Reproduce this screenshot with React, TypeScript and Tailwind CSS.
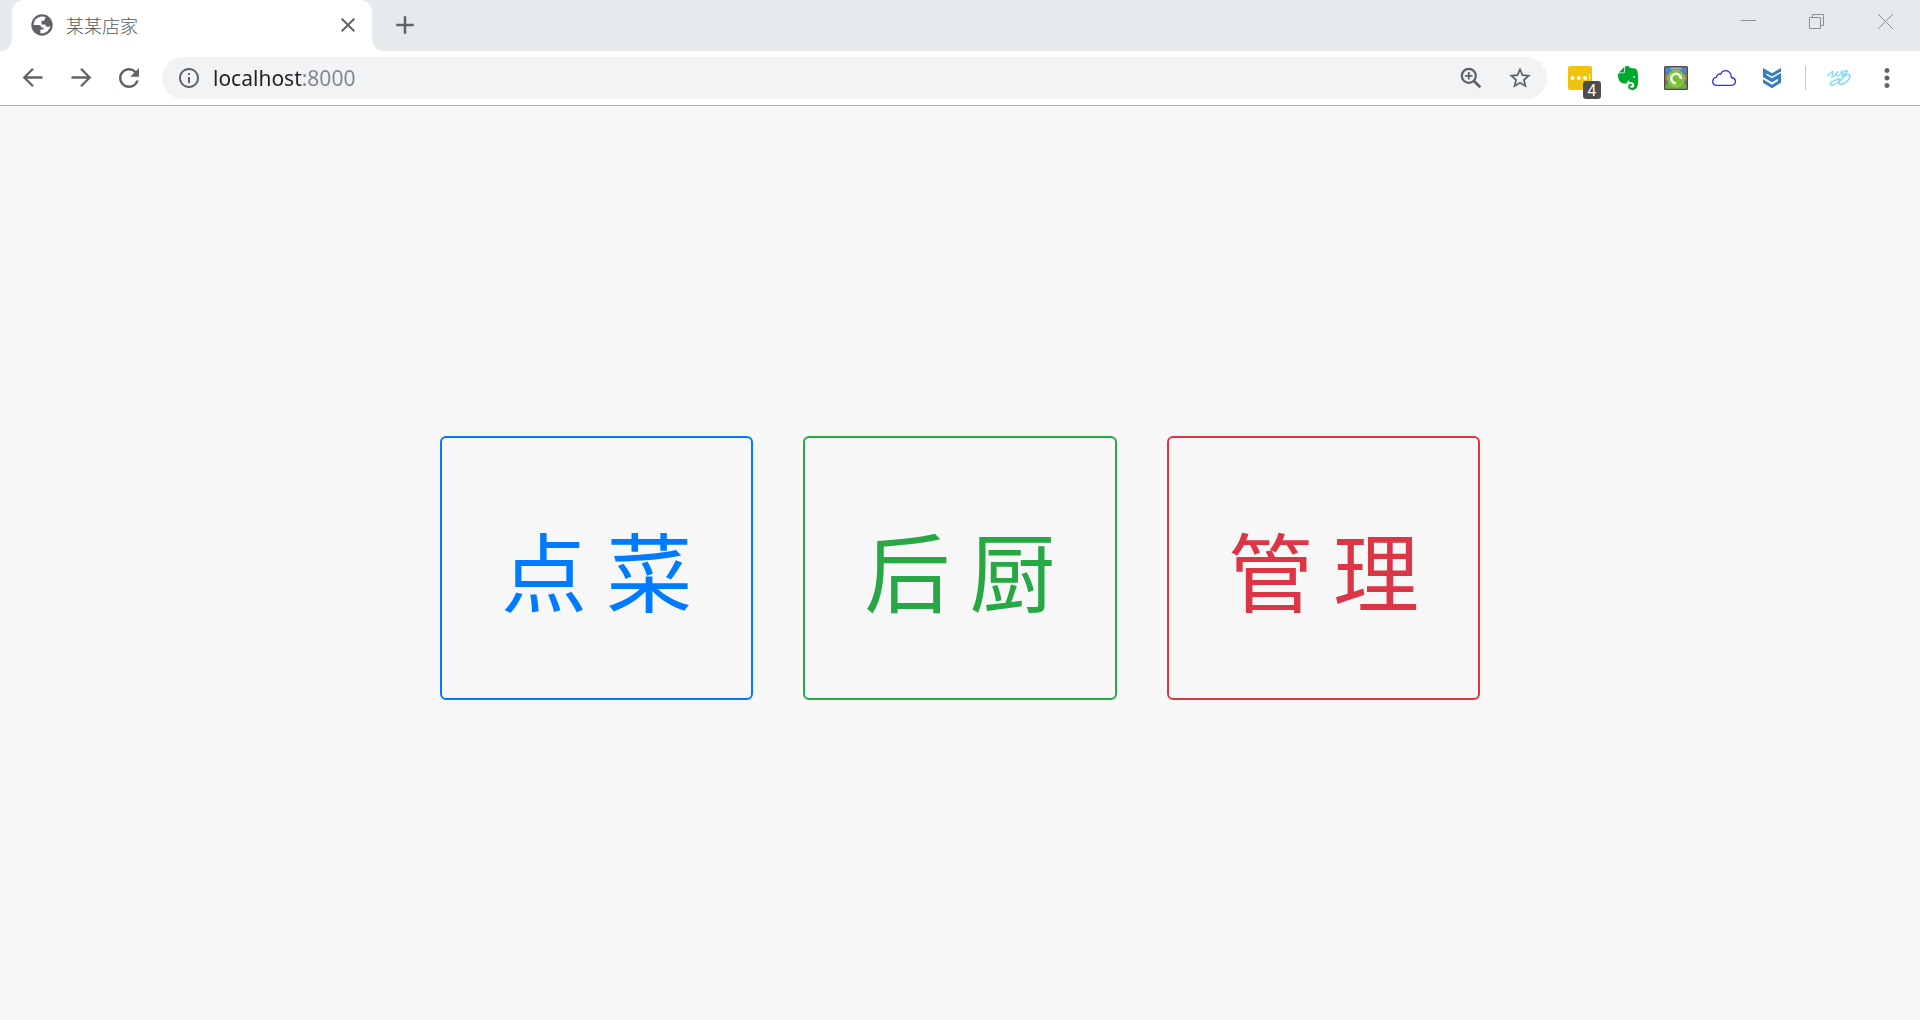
import { useState } from "react";
import {
  MdAdd,
  MdClose,
  MdInfoOutline,
  MdMoreVert,
  MdRefresh,
  MdStarBorder,
} from "react-icons/md";
import { SiEvernote } from "react-icons/si";

const entries = [
  { label: "点 菜", href: "#order", color: "border-[#007bff] text-[#007bff]" },
  { label: "后 厨", href: "#kitchen", color: "border-[#28a745] text-[#28a745]" },
  { label: "管 理", href: "#manage", color: "border-[#dc3545] text-[#dc3545]" },
];

function GlobeIcon() {
  return (
    <svg viewBox="0 0 22 22" className="size-[22px]">
      <circle cx="11" cy="11" r="10.7" fill="#5f6368" />
      <path
        d="M11.2 2.6C6.4 2.6 2.7 6.300 2.600 11h5.200c1.700 0 2.500.9 2.500 2.400h2.300v2h-3.200v3.800c4.600.9 9.300-2.700 9.900-7.200-.5.500-1.300.7-2.300.7-1.700 0-2.600-.9-2.600-2.300h-3.900V6.800h3c0-1.400.6-2.400 1.400-3.300-1.100-.6-2.400-.9-3.700-.9z"
        fill="#fff"
      />
    </svg>
  );
}

function ArrowIcon({ flip = false }: { flip?: boolean }) {
  return (
    <svg
      viewBox="0 0 24 24"
      className={flip ? "size-6 -scale-x-100" : "size-6"}
      fill="none"
      stroke="currentColor"
      strokeWidth="2.3"
    >
      <path d="M21.500 11.500H3.500M12 2.800l-8.700 8.700 8.700 8.700" />
    </svg>
  );
}

function ZoomIcon() {
  return (
    <svg viewBox="0 0 24 24" className="size-6" fill="none" stroke="currentColor">
      <circle cx="9.800" cy="9.800" r="7" strokeWidth="2.200" />
      <path d="M9.800 6v7.600M6 9.800h7.600" strokeWidth="1.800" />
      <path d="M15 15l6.300 6.300" strokeWidth="2.800" />
    </svg>
  );
}

function NotesIcon() {
  return (
    <svg viewBox="0 0 24 24" className="size-6">
      <rect width="24" height="24" rx="2" fill="#f0c30f" />
      <circle cx="4.500" cy="12" r="2" fill="#fff" />
      <circle cx="10.800" cy="12" r="2" fill="#fff" />
      <circle cx="17" cy="12" r="2" fill="#fff" />
      <path d="M21.500 8v6" stroke="#fff" strokeWidth="1" />
    </svg>
  );
}

function CaptureIcon() {
  return (
    <svg viewBox="0 0 24 24" className="size-6">
      <rect width="24" height="24" rx="1.500" fill="#6a7076" />
      <path d="M2 2h20v5H2z" fill="#4b86c4" />
      <path d="M7 1.500h10v2H7z" fill="#a3abb3" />
      <path d="M1.500 8.500h3v6h-3zM19.500 8.500h3v6h-3z" fill="#c0705f" />
      <path d="M1.500 22.500v-2.500l3-4h15l3 4v2.500z" fill="#6fb52c" />
      <circle cx="12" cy="12.500" r="8.300" fill="#7cc03a" stroke="#8fce55" />
      <path
        d="M12 17.300a4.800 4.800 0 1 1 4.800-4.300"
        fill="none"
        stroke="#eef8e4"
        strokeWidth="2.600"
      />
      <rect x=".5" y=".5" width="23" height="23" rx="1.500" fill="none" stroke="#4a4d50" />
    </svg>
  );
}

function CloudIcon() {
  return (
    <svg viewBox="0 0 24 24" className="size-6" fill="none" stroke="#2f2ff5" strokeWidth="1.300">
      <path d="M5 19.300h14.200c2.500 0 4.200-1.600 4.200-3.800 0-2.400-1.700-3.700-4.100-4 .2-4-2.300-6.800-5.600-6.800-2.500 0-4.200 1.300-5.100 3.500-2-.7-3.800.5-4 2.900C2.200 11.700.7 13 .7 15.400c0 2.400 1.800 3.900 4.300 3.900z" />
    </svg>
  );
}

function ChevronsIcon() {
  return (
    <svg viewBox="0 0 24 24" className="size-6" fill="#337ebd">
      <path d="M3 2l9 5.200L21 2v3.400L12 10.600l-5.600-3.200v1.500L12 12.200l9-5.200v9.700l-9 5.600-9-5.600v-3.400l9 5.500 6-3.700v-2.400l-6 3.500-9-5.200z" />
    </svg>
  );
}

function ScriptIcon() {
  return (
    <svg
      viewBox="0 0 24 24"
      className="size-6"
      fill="none"
      stroke="#79d7fa"
      strokeLinecap="round"
      strokeLinejoin="round"
    >
      <path
        d="M.8 9.500C3 7 5 5.500 6 5.500S4.500 9 4.800 10.300c.4 1.400 3.400-1 6-4.800-1.600 3-1.600 4.800-.3 4.600C12 9.800 14 7 15 4.600"
        strokeWidth="1.200"
      />
      <path
        d="M19.500 4.300c-3.500 1-5.300 4.500-4.500 5 1.300.5 4-1.500 5.500-4.300-3 5.500-8.200 11.800-12.700 13.500-3 1.200-5.500.5-4.400-1.500 1.400-2.200 5.700-2.700 8.900-4.300"
        strokeWidth="1.300"
      />
      <path
        d="M15.500 11c3-2.500 6.500-3.200 7.300-1.300.9 2.800-4 7.800-8.800 8.500-2.800.3-2.900-2.400-.8-4.900"
        strokeWidth="1.500"
      />
    </svg>
  );
}

function TabStrip() {
  return (
    <div className="flex h-[51px] bg-white">
      <div className="w-3 rounded-br-xl bg-[#e7eaed]" />
      <div className="w-[360px] bg-[#e7eaed]">
        <div className="flex h-full items-center rounded-t-xl bg-white pr-3 pb-px pl-[19px]">
          <GlobeIcon />
          <span className="ml-[13px] flex-1 font-['Noto_Sans_CJK_SC',sans-serif] text-[18px] leading-6 font-light text-[#54585d]">
            某某店家
          </span>
          <button aria-label="关闭标签页" className="text-[#5f6368]">
            <MdClose size={24} />
          </button>
        </div>
      </div>
      <div className="flex flex-1 items-center justify-between rounded-bl-xl bg-[#e7eaed] pb-px pl-[18px]">
        <button aria-label="新标签页" className="text-[#5f6368]">
          <MdAdd size={30} />
        </button>
        <div className="flex h-full items-start gap-[53px] pt-[13px] pr-[26px] text-[#8c8f92]">
          <button aria-label="最小化">
            <svg viewBox="0 0 16 16" className="size-4" stroke="currentColor">
              <path d="M1 7.500h15" />
            </svg>
          </button>
          <button aria-label="还原">
            <svg viewBox="0 0 16 16" className="size-4" fill="none" stroke="currentColor">
              <path d="M.5 4.500h11v11H.5zM3.500 4.500v-3h11v11h-3" />
            </svg>
          </button>
          <button aria-label="关闭">
            <svg viewBox="0 0 16 16" className="size-4" stroke="currentColor">
              <path d="M0 1l15 15M15 1L0 16" />
            </svg>
          </button>
        </div>
      </div>
    </div>
  );
}

function Toolbar() {
  const [url, setUrl] = useState("localhost:8000");

  return (
    <div className="flex h-[55px] items-center border-b border-[#b0b2b4] bg-white pr-[18px] pl-[21px] text-[#5f6368]">
      <div className="flex w-[141px] items-center gap-[21px]">
        <button aria-label="后退">
          <ArrowIcon />
        </button>
        <button aria-label="前进" className="ml-[3px]">
          <ArrowIcon flip />
        </button>
        <button aria-label="刷新">
          <MdRefresh size={30} />
        </button>
      </div>
      <div className="flex h-[42px] flex-1 items-center rounded-full bg-[#f1f3f4] pr-[14px] pl-[15px]">
        <MdInfoOutline size={24} />
        {/* host is dark, port is grey */}
        <input
          aria-label="地址"
          value={url}
          onChange={(e) => setUrl(e.target.value)}
          className="ml-3 min-w-0 flex-1 bg-[linear-gradient(90deg,#202124_90px,#80868b_90px)] bg-clip-text font-['Noto_Sans',sans-serif] text-[21px] leading-7 text-transparent caret-black outline-none"
        />
        <button aria-label="缩放">
          <ZoomIcon />
        </button>
        <button aria-label="收藏" className="ml-6">
          <MdStarBorder size={26} />
        </button>
      </div>
      <div className="ml-[21px] flex items-center gap-6">
        <button aria-label="便签" className="relative">
          <NotesIcon />
          <span className="absolute top-[15px] left-[15px] size-[18px] rounded-[3px] bg-[#4b4d4f] text-center font-['Liberation_Sans',sans-serif] text-[16px] leading-[19px] text-white">
            4
          </span>
        </button>
        <button aria-label="印象笔记">
          <SiEvernote size={24} color="#00a82d" />
        </button>
        <button aria-label="截图">
          <CaptureIcon />
        </button>
        <button aria-label="云">
          <CloudIcon />
        </button>
        <button aria-label="下载">
          <ChevronsIcon />
        </button>
      </div>
      <div className="mx-[21px] h-6 w-px bg-[#c4c6c8]" />
      <button aria-label="用户">
        <ScriptIcon />
      </button>
      <button aria-label="更多" className="ml-[21px]">
        <MdMoreVert size={30} />
      </button>
    </div>
  );
}

export default function App() {
  return (
    <div className="flex min-h-screen flex-col bg-[#f7f7f7]">
      <header>
        <TabStrip />
        <Toolbar />
      </header>
      <main className="flex flex-1 flex-wrap items-center justify-center gap-[50px] pt-[10px]">
        {entries.map((entry) => (
          <a
            key={entry.href}
            href={entry.href}
            className={`rounded-md border-2 px-[59px] pt-[68px] pb-[66px] font-['Noto_Sans_CJK_SC',sans-serif] text-[86px] leading-[126px] whitespace-nowrap ${entry.color}`}
          >
            {entry.label}
          </a>
        ))}
      </main>
    </div>
  );
}
